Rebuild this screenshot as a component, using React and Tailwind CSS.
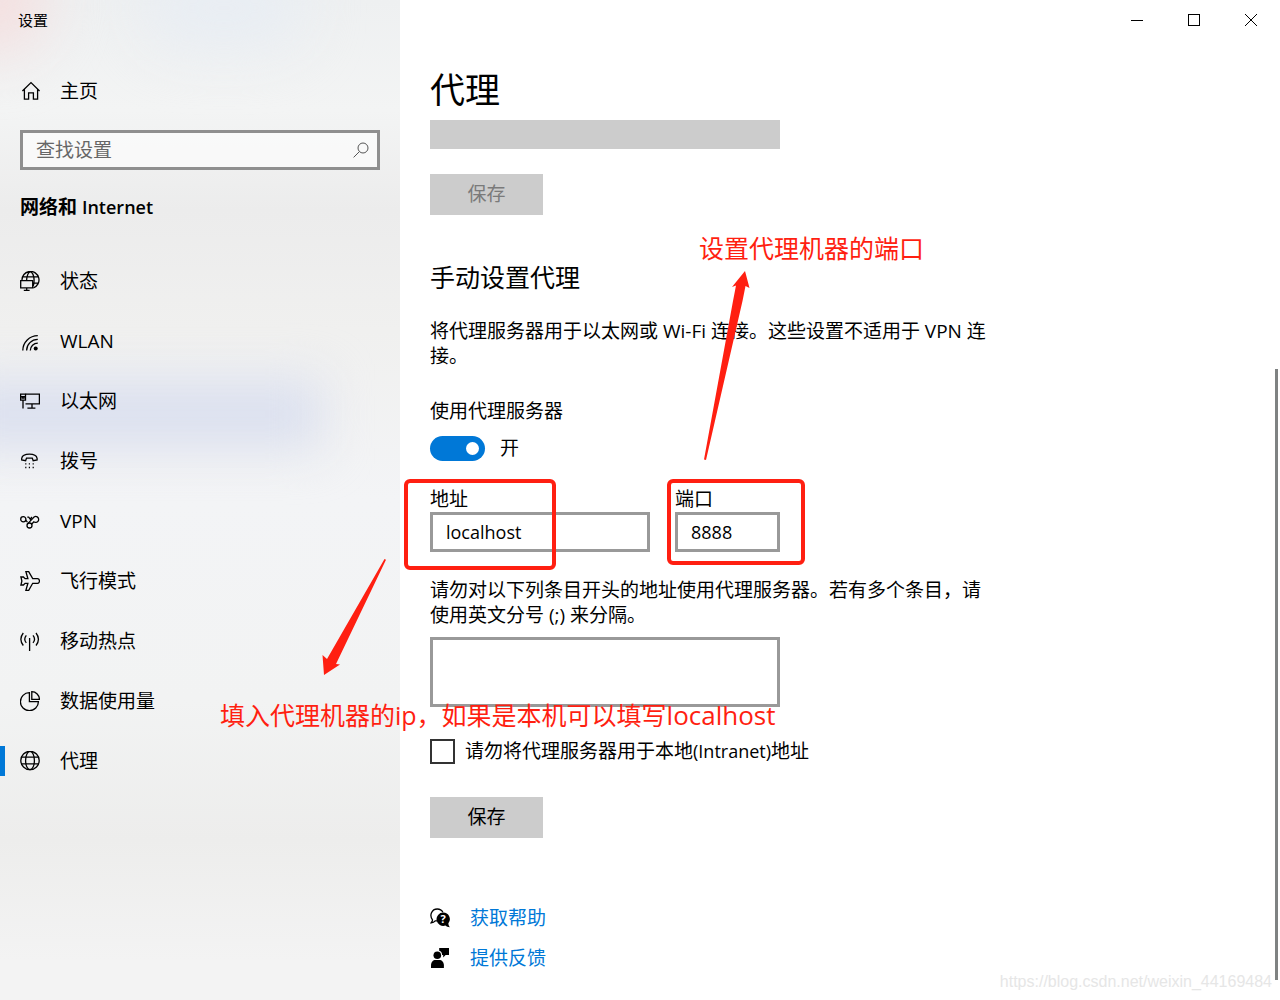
import { useState } from 'react'

const stroke = { fill: 'none', stroke: 'currentColor', strokeWidth: 1.3 }

function Icon({ children }) {
  return (
    <svg viewBox="0 0 20 20" className="w-5 h-5 shrink-0" aria-hidden="true" {...stroke}>
      {children}
    </svg>
  )
}

const HomeIcon = () => (
  <Icon>
    <path d="M2.4 10 11 1.6 19.6 10M4.4 8.4v9.8h4.2v-6.4h4.8v6.4h4.2V8.4" />
  </Icon>
)

const StatusIcon = () => (
  <Icon>
    <path d="M2 9.3a8.5 8.5 0 1 1 11.4 7.6M6.6 9.3C6.8 4 8.8.8 10.3.8c1.8 0 3.8 3.4 3.8 8.4 0 2.8-.4 4.6-1 6M2.8 5.9h15.4M13 12.2h5.4" />
    <path d="M.7 9.7h12v7.2H.7zM6.7 17v2.2M3.8 19.3h5.8" />
  </Icon>
)

const WlanIcon = () => (
  <Icon>
    <path d="M2.8 19.5A15 15 0 0 1 17.8 4.6M6.6 19.5A11.2 11.2 0 0 1 17.8 8.4M10.3 19.5a7.5 7.5 0 0 1 7.5-7.4" />
    <circle cx="15.7" cy="17.4" r="2" fill="currentColor" stroke="none" />
  </Icon>
)

const EthernetIcon = () => (
  <Icon>
    <path d="M5.5 3.2h13.9v9.7H5.5M12 13v4M7.4 17.2h8" />
    <path d="M.6 3.2h4.9v6H.6zM3 9.2v8.2M.8 5.6h4.5M2.2 5.6v1.6h1.8V5.6" />
  </Icon>
)

const DialIcon = () => (
  <Icon>
    <path d="M1.7 8.9V7.3C2.2 4.6 5.2 3.2 9.4 3.2s7.2 1.4 7.7 4.1v1.6l-3.9.8-.9-2.5H6.5L5.6 9.7z" />
    <path d="M5.2 12.8h1.2M8.8 12.8H10M12.6 12.8h1.2M5.2 16.5h1.2M8.8 16.5H10M12.6 16.5h1.2" />
  </Icon>
)

const VpnIcon = () => (
  <Icon>
    <circle cx="3.3" cy="8.3" r="2.6" />
    <circle cx="9.5" cy="14.5" r="2.5" />
    <path d="M5.7 9.2 7.4 11.2M8 12.4 13 7.1a3 3 0 1 1 .8 3.7l-2 2.2M7.3 6.2h1.4l1.5 2 1.7-2.2" />
  </Icon>
)

const PlaneIcon = () => (
  <Icon>
    <path d="M5.9.7h2.8l4 6.9h4.8c2.6 0 2.6 4.7 0 4.7h-4.8l-4 7H5.9l2-7H5.1l-1.7 1.7H.9L1.9 10 .9 6h2.500l1.700 1.700h2.800z" />
  </Icon>
)

const HotspotIcon = () => (
  <Icon>
    <path d="M3.3 2c-3 3.8-3 8.6 0 12.5M6.3 4.4c-1.9 2.3-1.9 5.2 0 7.5M16 2c3 3.8 3 8.6 0 12.5M13 4.4c1.9 2.3 1.9 5.2 0 7.5M9.6 7v13" />
  </Icon>
)

const DataIcon = () => (
  <Icon>
    <path d="M9.4 1.7a9 9 0 1 0 9 9h-9z" />
    <path d="M11.8.7v7.6h7.6A7.6 7.6 0 0 0 11.8.7z" />
  </Icon>
)

const ProxyIcon = () => (
  <Icon>
    <circle cx="10" cy="9.5" r="9.2" />
    <ellipse cx="10" cy="9.5" rx="4.4" ry="9.2" />
    <path d="M1.5 6.2h17M1.5 12.8h17" />
  </Icon>
)

const HelpIcon = () => (
  <Icon>
    <path d="M9 12.8H5.2c-.8 1-2 1.8-4 2 .8-.9 1.4-1.9 1.3-3C-.9 7.6 1.6 1 7.3 1c2.6 0 4.5 1.2 5.6 3.2" />
    <path
      d="M13.2 4.5a6.600 6.600 0 0 1 5.200 10.700c-.1 1.700.5 3 1.600 4-2-.1-3.400-.7-4.500-1.700A6.700 6.700 0 1 1 13.200 4.500z"
      fill="currentColor"
      stroke="none"
    />
    <text x="13.2" y="15" textAnchor="middle" fill="#fff" stroke="none" className="text-[11px] font-bold font-['Open_Sans',sans-serif]">
      ?
    </text>
  </Icon>
)

const FeedbackIcon = () => (
  <Icon>
    <g fill="currentColor" stroke="none">
      <circle cx="7.3" cy="7.2" r="3.8" />
      <path d="M1 20v-2.500C1 14 3 12 5.500 12h3.800c2.500 0 4.600 2 4.600 5.500V20z" />
      <path d="M9.200 0H19v7h-3.400l-2.400 2.400V7h-1.100C12 4.500 11 3.300 9.200 2.800z" />
    </g>
  </Icon>
)

const NAV_ITEMS = [
  { label: '状态', icon: StatusIcon },
  { label: 'WLAN', icon: WlanIcon },
  { label: '以太网', icon: EthernetIcon },
  { label: '拨号', icon: DialIcon },
  { label: 'VPN', icon: VpnIcon },
  { label: '飞行模式', icon: PlaneIcon },
  { label: '移动热点', icon: HotspotIcon },
  { label: '数据使用量', icon: DataIcon },
  { label: '代理', icon: ProxyIcon, active: true },
]

function Sidebar() {
  return (
    <aside className="relative isolate w-[400px] shrink-0 overflow-hidden bg-[linear-gradient(to_bottom,#eef0f1_0px,#f3f4f4_110px,#ececec_210px,#f0f0ef_330px,#f3f4f6_500px,#f2f3f3_700px,#ededec_840px,#f3f3f3_960px)]">
      {/* acrylic tints */}
      <div className="absolute -z-10 -left-16 -top-14 w-28 h-28 rounded-full bg-[#f4e0e0] blur-[28px]" />
      <div className="absolute -z-10 left-36 -top-8 w-40 h-20 rounded-full bg-[#e8edf3] blur-[28px]" />
      <div className="absolute -z-10 -left-12 top-[380px] w-[370px] h-[68px] bg-[#dbe0ef] blur-[24px]" />

      <div className="h-10 pl-[18px] flex items-center text-[15px]">设置</div>

      <a href="#home" className="mt-[26px] h-[50px] pl-5 flex items-center gap-5">
        <HomeIcon />
        主页
      </a>

      <div className="relative mt-[14px] mx-5">
        <input
          type="search"
          aria-label="查找设置"
          placeholder="查找设置"
          className="block w-full h-10 border-3 border-[#8f8f8f] bg-white/60 pl-[13px] pr-10 placeholder:text-[#666] outline-none"
        />
        <svg viewBox="0 0 16 16" className="absolute right-[11px] top-3 w-4 h-4 text-[#555]" aria-hidden="true" fill="none" stroke="currentColor">
          <circle cx="10" cy="6" r="5" />
          <path d="M6.4 9.6.6 15.4" />
        </svg>
      </div>

      <h2 className="mt-[23px] pl-5 leading-7 font-bold">
        网络和 <span className="font-semibold text-[18px]">Internet</span>
      </h2>

      <nav className="mt-[30px]">
        {NAV_ITEMS.map(({ label, icon: NavIcon, active }) => (
          <a key={label} href="#" aria-current={active ? 'page' : undefined} className="relative h-[60px] pl-5 flex items-center gap-5">
            {active && <span className="absolute left-0 w-[5px] h-[30px] bg-[#0078d7]" />}
            <NavIcon />
            {label}
          </a>
        ))}
      </nav>
    </aside>
  )
}

function TitleBar() {
  return (
    <div className="h-10 pr-px flex justify-end">
      <button aria-label="最小化" className="w-[57px] flex items-center justify-center">
        <span className="w-3 h-px bg-black" />
      </button>
      <button aria-label="最大化" className="w-[57px] flex items-center justify-center">
        <span className="w-3 h-3 border border-black" />
      </button>
      <button aria-label="关闭" className="w-[57px] flex items-center justify-center">
        <svg viewBox="0 0 12 12" className="w-3 h-3" stroke="currentColor" aria-hidden="true">
          <path d="M0 0 12 12M12 0 0 12" />
        </svg>
      </button>
    </div>
  )
}

const INPUT = 'block w-full h-10 border-3 border-[#999] bg-white px-[13px] text-[18px] outline-none'
const MARK = 'absolute border-4 border-[#ff1f11] rounded-md pointer-events-none'

export default function App() {
  const [enabled, setEnabled] = useState(true)
  const [skipLocal, setSkipLocal] = useState(false)
  const [address, setAddress] = useState('localhost')
  const [port, setPort] = useState('8888')
  const [exceptions, setExceptions] = useState('')

  return (
    <div className="relative flex min-h-screen bg-white text-black text-[19px] leading-[25px] font-['Open_Sans','Noto_Sans_CJK_SC',sans-serif]">
      <Sidebar />

      <main className="relative flex-1 min-w-0">
        <TitleBar />

        <div className="pl-[30px] pr-5">
          <h1 className="mt-[26px] text-[35px] leading-[48px]">代理</h1>
          <div className="mt-1.5 w-[350px] h-[29px] bg-[#ccc]" />
          <button disabled className="block mt-[25px] w-[113px] h-[41px] bg-[#ccc] text-[#7a7a7a]">
            保存
          </button>

          <h2 className="mt-[46px] text-[25px] leading-8">手动设置代理</h2>
          <p className="mt-[26px] max-w-[560px]">将代理服务器用于以太网或 Wi-Fi 连接。这些设置不适用于 VPN 连接。</p>

          <label htmlFor="use-proxy" className="block mt-[30px]">
            使用代理服务器
          </label>
          <div className="mt-3 flex items-center gap-[15px]">
            <input
              id="use-proxy"
              type="checkbox"
              role="switch"
              checked={enabled}
              onChange={(e) => setEnabled(e.target.checked)}
              className="appearance-none w-[55px] h-[25px] px-1.5 flex items-center rounded-full bg-[#999] checked:bg-[#0078d7] checked:justify-end before:w-[13px] before:h-[13px] before:rounded-full before:bg-white"
            />
            <span>{enabled ? '开' : '关'}</span>
          </div>

          <div className="mt-[26px] flex gap-[25px]">
            <div className="relative w-[220px]">
              <label htmlFor="address">地址</label>
              <input id="address" value={address} onChange={(e) => setAddress(e.target.value)} className={INPUT} />
              <div className={`${MARK} -left-[26px] -top-2 w-[152px] h-[91px]`} />
            </div>
            <div className="relative w-[105px]">
              <label htmlFor="port">端口</label>
              <input id="port" value={port} onChange={(e) => setPort(e.target.value)} className={INPUT} />
              <div className={`${MARK} -left-2 -top-2 w-[138px] h-[86px]`} />
            </div>
          </div>

          <label htmlFor="exceptions" className="block mt-[26px] max-w-[560px]">
            请勿对以下列条目开头的地址使用代理服务器。若有多个条目，请使用英文分号 (;) 来分隔。
          </label>
          <textarea
            id="exceptions"
            value={exceptions}
            onChange={(e) => setExceptions(e.target.value)}
            className="block mt-[9px] w-[350px] h-[70px] resize-none border-3 border-[#999] px-[13px] outline-none"
          />

          <div className="mt-8 flex items-center gap-2.5">
            <input
              id="skip-local"
              type="checkbox"
              checked={skipLocal}
              onChange={(e) => setSkipLocal(e.target.checked)}
              className="appearance-none w-[25px] h-[25px] border-2 border-[#333] checked:bg-[#0078d7]"
            />
            <label htmlFor="skip-local">
              请勿将代理服务器用于本地<span className="text-[18px]">(Intranet)</span>地址
            </label>
          </div>

          <button className="block mt-[33px] w-[113px] h-[41px] bg-[#ccc]">保存</button>

          <div className="mt-[65px] flex flex-col items-start gap-2.5">
            <a href="#help" className="h-[30px] flex items-center gap-5">
              <HelpIcon />
              <span className="text-[#0078d7]">获取帮助</span>
            </a>
            <a href="#feedback" className="h-[30px] flex items-center gap-5">
              <FeedbackIcon />
              <span className="text-[#0078d7]">提供反馈</span>
            </a>
          </div>
        </div>

        <div className="absolute right-0.5 top-[369px] bottom-5 w-[3px] bg-[#7f8282]" />
        <div className="absolute right-2 bottom-2 text-[16px] leading-5 text-[#e6e6e6] font-['Liberation_Sans',sans-serif]">
          https://blog.csdn.net/weixin_44169484
        </div>
      </main>

      {/* hand-drawn notes on top of the window */}
      <div className="absolute left-0 top-0 pointer-events-none text-[25px] leading-8 whitespace-nowrap text-[#ff1f11]">
        <p className="absolute left-[699px] top-[232px]">设置代理机器的端口</p>
        <svg viewBox="0 0 48 190" className="absolute left-[703px] top-[271px] w-12 h-[190px]" fill="currentColor" aria-hidden="true">
          <path d="M42 0 29 16l4-1.5L30 30 1 188.5l2 .5L39.5 30 42.5 15l4 2z" />
        </svg>
        <svg viewBox="0 0 66 118" className="absolute left-[321px] top-[558px] w-[66px] h-[118px]" fill="currentColor" aria-hidden="true">
          <path d="M3 117 1.5 97l4.5 4L63.5 1l1.5.8L15 106l4 .5z" />
        </svg>
        <p className="absolute left-[220px] top-[699px]">
          填入代理机器的ip，如果是本机可以填写<span className="text-[26px]">localhost</span>
        </p>
      </div>
    </div>
  )
}
